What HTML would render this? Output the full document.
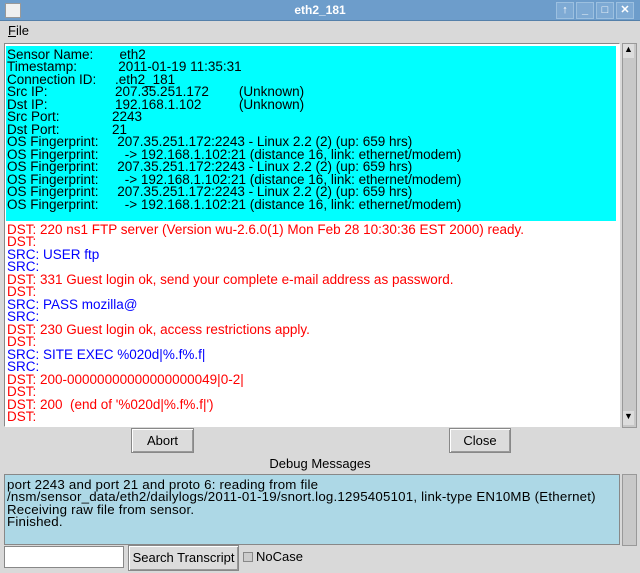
<!DOCTYPE html><html><head><style>
body{margin:0;width:640px;height:573px;background:#d9d9d9;font-family:"Liberation Sans",sans-serif;position:relative;overflow:hidden}
.a{position:absolute}
.tb{left:0;top:0;width:640px;height:20px;background:#6d9dcb;border-bottom:1px solid #5580aa}
.tt{left:0;width:640px;top:3px;text-align:center;color:#fff;font-size:12px;font-weight:bold}
.wb{top:2px;width:16px;height:15px;background:#7eaad4;border:1px solid #9cc0e0;color:#fff;font-size:11px;text-align:center;line-height:15px;font-weight:bold}
.txt{font-size:13.5px}
.txt div{height:12.5px;line-height:12.5px;white-space:pre}
.dbg div{height:12.3px;line-height:12.3px}
.sb{background:#c8c8c8;border:1px solid #999}
.btn{background:#dcdcdc;border:1px solid #888;box-shadow:inset 1px 1px #fff,inset -1px -1px #999;font-size:13px;text-align:center}
.r{color:#f00}.b{color:#00f}
</style></head><body>
<div class="a tb"></div>
<div class="a" style="left:5px;top:3px;width:14px;height:13px;background:#f0f0f0;border:1px solid #999"></div>
<div class="a tt">eth2_181</div>
<div class="a wb" style="left:556px">↑</div>
<div class="a wb" style="left:576px">_</div>
<div class="a wb" style="left:596px">□</div>
<div class="a wb" style="left:616px">✕</div>
<div class="a" style="left:8px;top:23px;font-size:13px"><u>F</u>ile</div>
<div class="a" style="left:4px;top:43px;width:614px;height:382px;background:#fff;border:1px solid #888;border-right-color:#fff;border-bottom-color:#fff"></div>
<div class="a" style="left:6px;top:46px;width:610px;height:175px;background:#00ffff"></div>
<div class="a txt" style="left:7px;top:48.5px">
<div>Sensor Name:       eth2</div>
<div>Timestamp:           2011-01-19 11:35:31</div>
<div>Connection ID:     .eth2_181</div>
<div>Src IP:                  207.35.251.172        (Unknown)</div>
<div>Dst IP:                  192.168.1.102          (Unknown)</div>
<div>Src Port:              2243</div>
<div>Dst Port:              21</div>
<div>OS Fingerprint:     207.35.251.172:2243 - Linux 2.2 (2) (up: 659 hrs)</div>
<div>OS Fingerprint:       -&gt; 192.168.1.102:21 (distance 16, link: ethernet/modem)</div>
<div>OS Fingerprint:     207.35.251.172:2243 - Linux 2.2 (2) (up: 659 hrs)</div>
<div>OS Fingerprint:       -&gt; 192.168.1.102:21 (distance 16, link: ethernet/modem)</div>
<div>OS Fingerprint:     207.35.251.172:2243 - Linux 2.2 (2) (up: 659 hrs)</div>
<div>OS Fingerprint:       -&gt; 192.168.1.102:21 (distance 16, link: ethernet/modem)</div>
<div></div>
<div class="r">DST: 220 ns1 FTP server (Version wu-2.6.0(1) Mon Feb 28 10:30:36 EST 2000) ready.</div>
<div class="r">DST:</div>
<div class="b">SRC: USER ftp</div>
<div class="b">SRC:</div>
<div class="r">DST: 331 Guest login ok, send your complete e-mail address as password.</div>
<div class="r">DST:</div>
<div class="b">SRC: PASS mozilla@</div>
<div class="b">SRC:</div>
<div class="r">DST: 230 Guest login ok, access restrictions apply.</div>
<div class="r">DST:</div>
<div class="b">SRC: SITE EXEC %020d|%.f%.f|</div>
<div class="b">SRC:</div>
<div class="r">DST: 200-00000000000000000049|0-2|</div>
<div class="r">DST:</div>
<div class="r">DST: 200  (end of '%020d|%.f%.f|')</div>
<div class="r">DST:</div>
</div>
<div class="a sb" style="left:622px;top:43px;width:13px;height:383px"></div>
<div class="a" style="left:623px;top:44px;width:11px;height:14px;background:#ddd;font-size:9px;text-align:center">▲</div>
<div class="a" style="left:623px;top:411px;width:11px;height:14px;background:#ddd;font-size:9px;text-align:center">▼</div>
<div class="a btn" style="left:131px;top:428px;width:61px;height:23px;line-height:23px">Abort</div>
<div class="a btn" style="left:449px;top:428px;width:60px;height:23px;line-height:23px">Close</div>
<div class="a" style="left:0;width:640px;top:456px;text-align:center;font-size:13px">Debug Messages</div>
<div class="a" style="left:4px;top:474px;width:614px;height:69px;background:#add8e6;border:1px solid #888"></div>
<div class="a txt dbg" style="left:7px;top:479px;letter-spacing:0.2px;font-size:13.3px">
<div>port 2243 and port 21 and proto 6: reading from file</div>
<div>/nsm/sensor_data/eth2/dailylogs/2011-01-19/snort.log.1295405101, link-type EN10MB (Ethernet)</div>
<div>Receiving raw file from sensor.</div>
<div>Finished.</div>
</div>
<div class="a sb" style="left:622px;top:474px;width:13px;height:70px"></div>
<div class="a" style="left:4px;top:546px;width:118px;height:20px;background:#fff;border:1px solid #888"></div>
<div class="a btn" style="left:128px;top:545px;width:109px;height:24px;line-height:24px">Search Transcript</div>
<div class="a" style="left:243px;top:552px;width:8px;height:8px;background:#ccc;border:1px solid #888"></div>
<div class="a" style="left:256px;top:549px;font-size:13px">NoCase</div>
</body></html>
